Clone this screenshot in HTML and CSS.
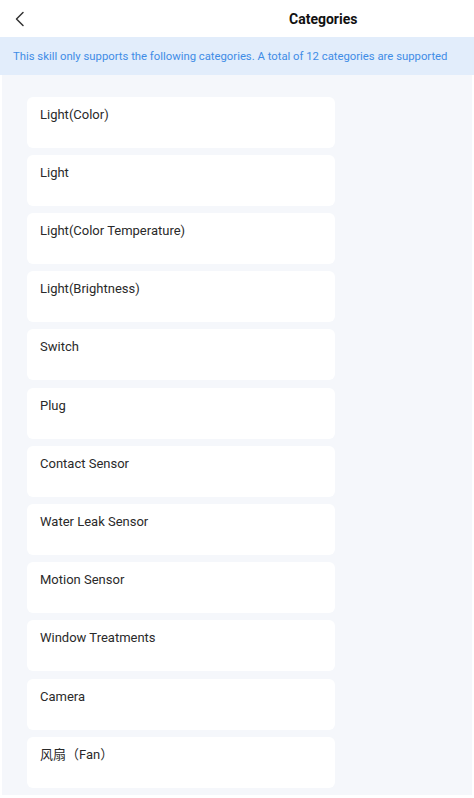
FILE: index.html
```html
<!DOCTYPE html>
<html lang="en">
<head>
    <meta charset="UTF-8">
    <meta name="viewport" content="width=device-width, initial-scale=1.0">
    <title>Categories</title>
    <link rel="stylesheet" href="styles.css">
</head>
<body>
    <header class="top-bar">
        <button class="back-btn" aria-label="Back">
            <svg width="12" height="16" viewBox="0 0 12 16">
                <path d="M9 1.5 L2.5 8 L9 14.5" fill="none" stroke="#333" stroke-width="1.5" stroke-linecap="round" stroke-linejoin="round"/>
            </svg>
        </button>
        <h1 class="page-title">Categories</h1>
    </header>

    <div class="notice">This skill only supports the following categories. A total of 12 categories are supported</div>

    <main class="content">
        <ul class="category-list">
            <li class="category-card">Light(Color)</li>
            <li class="category-card">Light</li>
            <li class="category-card">Light(Color Temperature)</li>
            <li class="category-card">Light(Brightness)</li>
            <li class="category-card">Switch</li>
            <li class="category-card">Plug</li>
            <li class="category-card">Contact Sensor</li>
            <li class="category-card">Water Leak Sensor</li>
            <li class="category-card">Motion Sensor</li>
            <li class="category-card">Window Treatments</li>
            <li class="category-card">Camera</li>
            <li class="category-card">风扇（Fan）</li>
        </ul>
    </main>
</body>
</html>
```

FILE: styles.css
```css
:root {
    --blue: #3f8ce6;
    --notice-bg: #e2edfb;
    --page-bg: #f5f7fb;
    --text: #2a2a2a;
}

body {
    font-family: Roboto, "Noto Sans CJK SC", sans-serif;
    margin: 0;
    padding: 0;
    background-color: #fff;
    color: var(--text);
    width: 474px;
    height: 798px;
    overflow: hidden;
}

.top-bar {
    height: 37px;
    display: flex;
    align-items: center;
}

.back-btn {
    background: none;
    border: none;
    padding: 0;
    margin-left: 13px;
    width: 14px;
    height: 20px;
    display: flex;
    align-items: center;
    justify-content: center;
    cursor: pointer;
}

.page-title {
    margin: 0 0 0 262px;
    font-size: 14px;
    font-weight: 700;
    color: #111;
}

.notice {
    height: 38px;
    display: flex;
    align-items: center;
    padding-left: 13px;
    background-color: var(--notice-bg);
    color: var(--blue);
    font-size: 11.3px;
    white-space: nowrap;
}

.content {
    margin: 0 2px;
    background-color: var(--page-bg);
    padding: 21.7px 0 7px 25px;
}

.category-list {
    list-style: none;
    margin: 0;
    padding: 0;
    display: flex;
    flex-direction: column;
    gap: 7.2px;
}

.category-card {
    width: 308px;
    height: 51px;
    box-sizing: border-box;
    background-color: #fff;
    border-radius: 6px;
    padding: 9px 13px 0;
    font-size: 13px;
    line-height: 17px;
}
```
